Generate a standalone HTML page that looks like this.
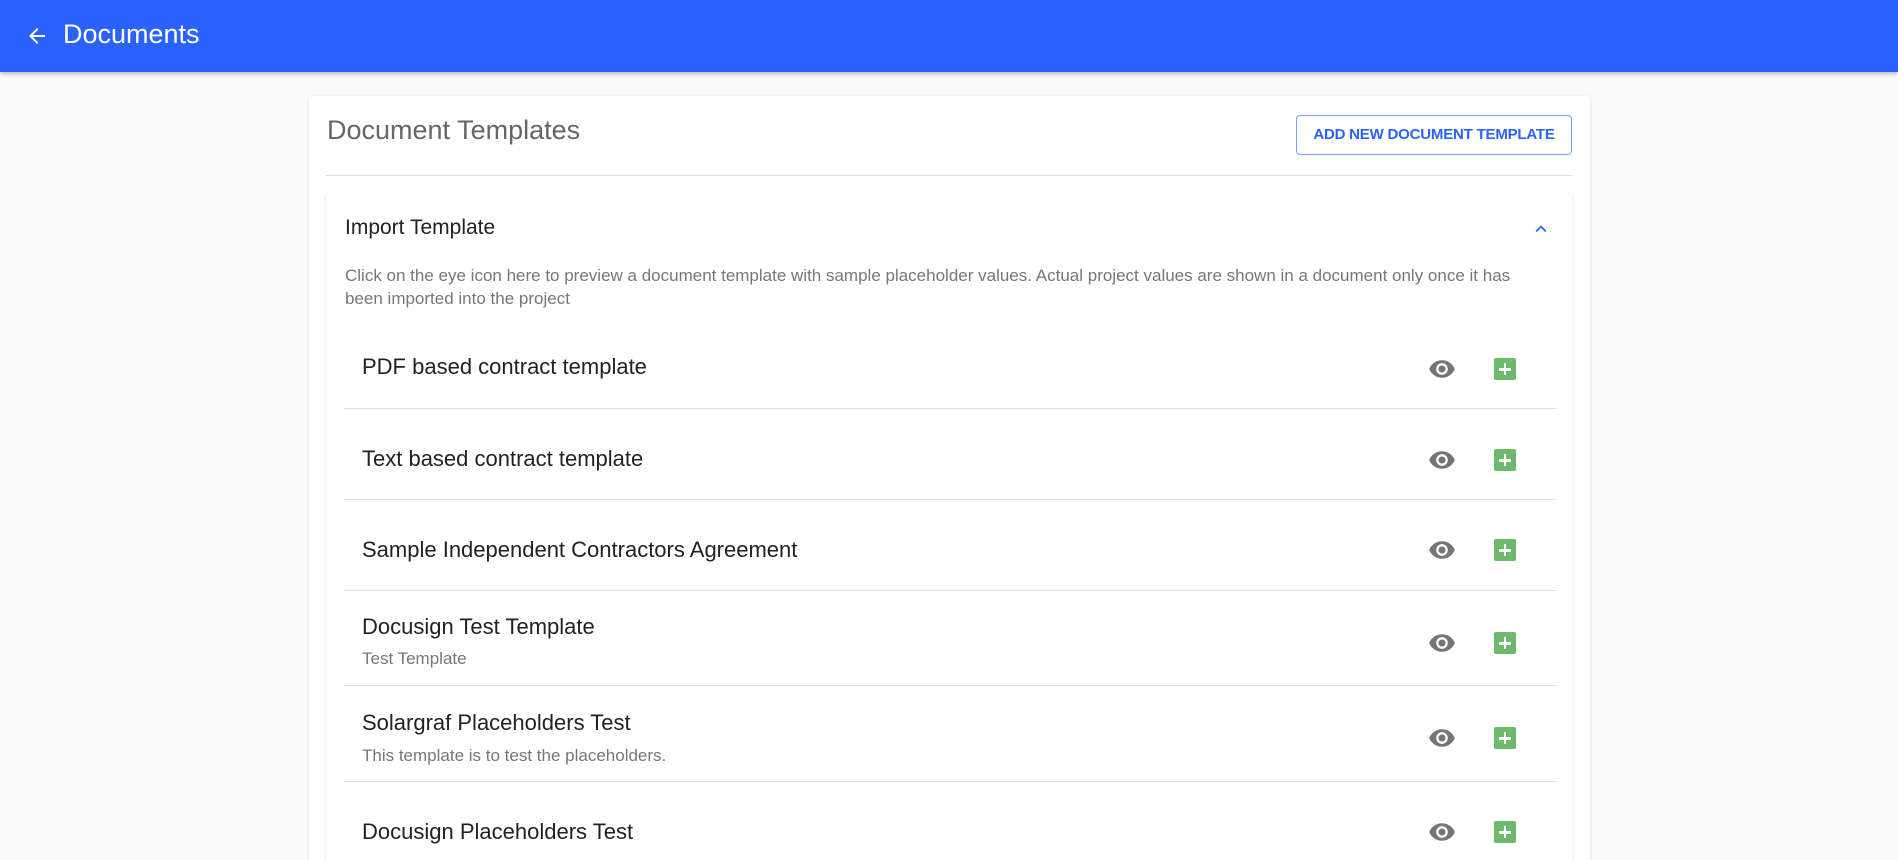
<!DOCTYPE html>
<html><head><style>
*{margin:0;padding:0;box-sizing:border-box}
html,body{width:1898px;height:860px;overflow:hidden}
body{background:#fafafa;font-family:"Liberation Sans",sans-serif;position:relative}
.hdr{position:absolute;left:0;top:0;width:1898px;height:72px;background:#2962ff;box-shadow:0 2px 4px rgba(0,0,0,.25);z-index:2}
.hdr .t{position:absolute;left:63px;top:19px;color:#fff;font-size:27px}
.card{position:absolute;left:309px;top:96px;width:1281px;height:764px;background:#fff;border-radius:4px 4px 0 0;box-shadow:0 1px 3px rgba(0,0,0,.15)}
.a{position:absolute}
.h1{left:327px;top:115px;font-size:27px;color:#666}
.btn{left:1296px;top:115px;width:276px;height:40px;border:1px solid #7f9cf5;border-radius:4px;color:#2962ff;font-size:15px;font-weight:bold;text-align:center;line-height:38px;letter-spacing:-0.2px}
.div{left:326px;top:175px;width:1246px;height:1px;background:#ddd}
.inner{left:326px;top:195px;width:1246px;height:665px;background:#fff;box-shadow:0 1px 3px rgba(0,0,0,.12)}
.it{left:345px;top:216px;font-size:21px;color:#222}
.desc{left:345px;top:264px;width:1175px;font-size:17px;line-height:23px;color:#777}
.row{position:absolute;left:344px;width:1212px;border-bottom:1px solid #ddd}
.rt{position:absolute;left:18px;font-size:22px;color:#222}
.rs{position:absolute;left:18px;font-size:17px;color:#777}
.eye{position:absolute;left:1084px}
.plus{position:absolute;left:1150px;width:22px;height:22px;background:#6dba6f;border-radius:2px}
.plus:before{content:"";position:absolute;left:5px;top:10px;width:12px;height:2.5px;background:#fff}
.plus:after{content:"";position:absolute;left:9.7px;top:5px;width:2.5px;height:12px;background:#fff}
</style></head><body>
<div class="hdr">
<svg class="a" style="left:25px;top:24px" width="24" height="24" viewBox="0 0 24 24"><path d="M20 11H7.83l5.59-5.59L12 4l-8 8 8 8 1.41-1.41L7.83 13H20v-2z" fill="#fff"/></svg>
<div class="t">Documents</div></div>
<div class="card"></div>
<div class="a h1">Document Templates</div>
<div class="a btn">ADD NEW DOCUMENT TEMPLATE</div>
<div class="a div"></div>
<div class="a inner"></div>
<div class="a it">Import Template</div>
<svg class="a" style="left:1530px;top:218px" width="22" height="22" viewBox="0 0 24 24"><path d="M7.41 15.41L12 10.83l4.59 4.58L18 14l-6-6-6 6z" fill="#2962ff"/></svg>
<div class="a desc">Click on the eye icon here to preview a document template with sample placeholder values. Actual project values are shown in a document only once it has been imported into the project</div>

<div class="row" style="top:318px;height:91px"><div class="rt" style="top:36px">PDF based contract template</div>
<svg class="eye" style="top:37px" width="28" height="28" viewBox="0 0 24 24"><path d="M12 4.5C7 4.5 2.73 7.610 1 12c1.73 4.39 6 7.5 11 7.5s9.27-3.11 11-7.5c-1.73-4.39-6-7.5-11-7.5zM12 17c-2.76 0-5-2.24-5-5s2.240-5 5-5 5 2.24 5 5-2.24 5-5 5zm0-8c-1.66 0-3 1.34-3 3s1.34 3 3 3 3-1.34 3-3-1.34-3-3-3z" fill="#757575"/></svg>
<div class="plus" style="top:40px"></div></div>

<div class="row" style="top:409px;height:91px"><div class="rt" style="top:37px">Text based contract template</div>
<svg class="eye" style="top:37px" width="28" height="28" viewBox="0 0 24 24"><path d="M12 4.5C7 4.5 2.73 7.61 1 12c1.73 4.39 6 7.5 11 7.5s9.27-3.11 11-7.5c-1.73-4.39-6-7.5-11-7.5zM12 17c-2.76 0-5-2.24-5-5s2.24-5 5-5 5 2.24 5 5-2.24 5-5 5zm0-8c-1.66 0-3 1.34-3 3s1.34 3 3 3 3-1.34 3-3-1.34-3-3-3z" fill="#757575"/></svg>
<div class="plus" style="top:40px"></div></div>

<div class="row" style="top:500px;height:91px"><div class="rt" style="top:37px">Sample Independent Contractors Agreement</div>
<svg class="eye" style="top:36px" width="28" height="28" viewBox="0 0 24 24"><path d="M12 4.5C7 4.5 2.73 7.61 1 12c1.73 4.39 6 7.5 11 7.5s9.27-3.11 11-7.5c-1.73-4.39-6-7.5-11-7.5zM12 17c-2.76 0-5-2.24-5-5s2.24-5 5-5 5 2.24 5 5-2.24 5-5 5zm0-8c-1.66 0-3 1.34-3 3s1.34 3 3 3 3-1.34 3-3-1.34-3-3-3z" fill="#757575"/></svg>
<div class="plus" style="top:39px"></div></div>

<div class="row" style="top:591px;height:95px"><div class="rt" style="top:23px">Docusign Test Template</div><div class="rs" style="top:58px">Test Template</div>
<svg class="eye" style="top:38px" width="28" height="28" viewBox="0 0 24 24"><path d="M12 4.5C7 4.5 2.73 7.61 1 12c1.73 4.39 6 7.5 11 7.5s9.27-3.11 11-7.5c-1.73-4.39-6-7.5-11-7.5zM12 17c-2.76 0-5-2.24-5-5s2.24-5 5-5 5 2.24 5 5-2.24 5-5 5zm0-8c-1.66 0-3 1.34-3 3s1.34 3 3 3 3-1.34 3-3-1.34-3-3-3z" fill="#757575"/></svg>
<div class="plus" style="top:41px"></div></div>

<div class="row" style="top:686px;height:96px"><div class="rt" style="top:24px">Solargraf Placeholders Test</div><div class="rs" style="top:60px">This template is to test the placeholders.</div>
<svg class="eye" style="top:38px" width="28" height="28" viewBox="0 0 24 24"><path d="M12 4.5C7 4.5 2.73 7.61 1 12c1.73 4.39 6 7.5 11 7.5s9.27-3.11 11-7.5c-1.73-4.39-6-7.5-11-7.5zM12 17c-2.76 0-5-2.24-5-5s2.24-5 5-5 5 2.24 5 5-2.24 5-5 5zm0-8c-1.66 0-3 1.34-3 3s1.34 3 3 3 3-1.34 3-3-1.34-3-3-3z" fill="#757575"/></svg>
<div class="plus" style="top:41px"></div></div>

<div class="row" style="top:782px;height:78px;border:none"><div class="rt" style="top:37px">Docusign Placeholders Test</div>
<svg class="eye" style="top:36px" width="28" height="28" viewBox="0 0 24 24"><path d="M12 4.5C7 4.5 2.73 7.61 1 12c1.73 4.39 6 7.5 11 7.5s9.27-3.11 11-7.5c-1.73-4.39-6-7.5-11-7.5zM12 17c-2.76 0-5-2.24-5-5s2.24-5 5-5 5 2.24 5 5-2.24 5-5 5zm0-8c-1.66 0-3 1.34-3 3s1.34 3 3 3 3-1.34 3-3-1.34-3-3-3z" fill="#757575"/></svg>
<div class="plus" style="top:39px"></div></div>
</body></html>
